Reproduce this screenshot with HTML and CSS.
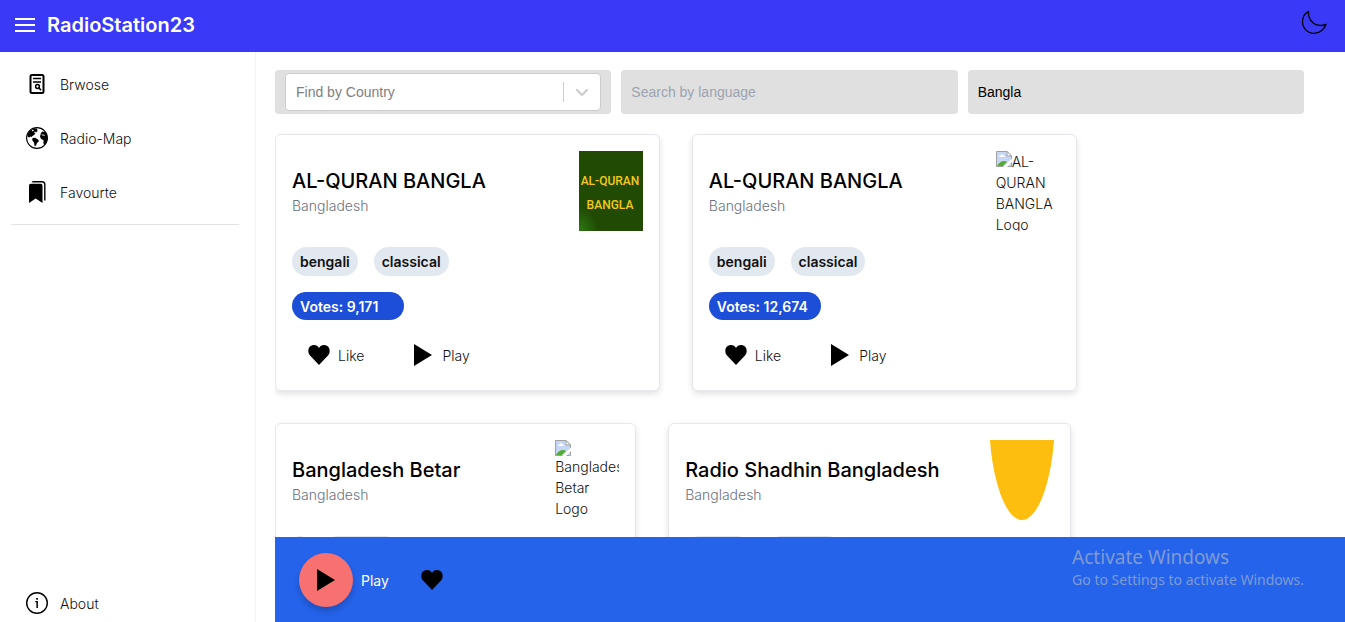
FILE: index.html
```html
<!DOCTYPE html>
<html lang="en">
<head>
    <meta charset="UTF-8">
    <meta name="viewport" content="width=device-width, initial-scale=1.0">
    <title>RadioStation23</title>
    <link rel="stylesheet" href="styles.css">
</head>
<body>
    <!-- shared icons -->
    <svg class="sprite" aria-hidden="true">
        <symbol id="heart" viewBox="0 0 22 22">
            <path d="M11 21 L2 11.500 C-1 8 0 1.500 5.500 1 C8 .8 10 2 11 4 C12 2 14 .8 16.500 1 C22 1.500 23 8 20 11.500 Z"/>
        </symbol>
        <symbol id="play" viewBox="0 0 22 22">
            <path d="M2 0 L20 11 L2 22 Z"/>
        </symbol>
        <symbol id="broken" viewBox="0 0 16 16">
            <path d="M.5 .5 H11 L15.500 5 V15.500 H.5 Z" fill="#c5d6f7" stroke="#a0a0a0"/>
            <path d="M11 .5 V5 H15.500 Z" fill="#fff" stroke="#a0a0a0"/>
            <path d="M3 6 Q3 4.500 4.500 4.500 Q6 2 7.500 4.500 Q9 4.500 9 6 Z" fill="#fff"/>
            <path d="M1 15 Q4 10 8 10 Q10 10 11 11 L7 15 Z" fill="#54ab32"/>
            <path d="M7 16 L16 7.500 V11 L11 16 Z" fill="#fff"/>
        </symbol>
    </svg>

    <header class="header">
        <button class="icon-button" aria-label="Menu">
            <svg width="20" height="14" viewBox="0 0 20 14" fill="#fff"><path d="M0 0h20v2H0zM0 6h20v2H0zM0 12h20v2H0z"/></svg>
        </button>
        <h1 class="brand">RadioStation23</h1>
        <button class="icon-button theme" aria-label="Dark mode">
            <svg width="26" height="26" viewBox="0 0 26 26" fill="none" stroke="#000" stroke-width="1.300" stroke-linejoin="round"><path d="M7.500 1.500 C3.500 3.500 1.500 7.500 1.500 11.500 C1.500 18 6.500 23.300 13 23.300 C18.500 23.300 23.500 19.500 25 14.300 C22 15.800 16.500 16.300 12.500 13.200 C8.500 10 7 6.500 7.500 1.500 Z"/></svg>
        </button>
    </header>

    <div class="layout">
        <nav class="sidebar">
            <a class="nav-link" href="#">
                <svg class="icon" viewBox="0 0 22 22" fill="none" stroke="#000" stroke-width="2">
                    <rect x="4.500" y="2" width="13" height="18" rx="1.500"/>
                    <path d="M7 5.500h8M7 9h8" stroke-width="1.600"/>
                    <circle cx="11.500" cy="13.500" r="1.900" stroke-width="1.500"/>
                    <path d="M12.800 14.800L15 17.300" stroke-width="1.700"/>
                </svg>
                Brwose
            </a>
            <a class="nav-link" href="#">
                <svg class="icon" viewBox="0 0 22 22">
                    <circle cx="11" cy="11" r="10.400" fill="none" stroke="#000" stroke-width="1.100"/>
                    <path d="M1.500 7.500 L4 3.500 L7 1.500 L11 1.500 L11.500 4 L10 5.500 L9 4.500 L8 6 L9.500 6.500 L8 8 L6.500 9 L5.500 10 L4 9.500 L3.500 10.500 L2 10 Z"/>
                    <path d="M5.500 2.500 L8 3 L6.500 4.500 Z" fill="#fff"/>
                    <path d="M6.500 11 L9 10.800 L12 12.500 L13 14 L11 16 L10 18.500 L8.700 19.500 L8 15.500 L6.300 13.500 Z"/>
                    <path d="M15 6 L16.500 4.500 L19 5 L21 8 L21.600 12 L20.500 15.500 L18.500 18 L17.500 17 L17.500 13 L15 12 L14 9.500 Z"/>
                    <path d="M15.500 7.200 L19 8 L18.500 8.800 L16 8.200 Z" fill="#fff"/>
                </svg>
                Radio-Map
            </a>
            <a class="nav-link" href="#">
                <svg class="icon" viewBox="0 0 22 22">
                    <path d="M3 22 V4.500 Q3 2.700 4.800 2.700 H14.700 Q16.500 2.700 16.500 4.500 V22 L9.700 17.500 Z"/>
                    <path d="M6 1 Q6.500 .7 8 .7 H16 Q18.800 .7 18.800 3.500 V19.500" fill="none" stroke="#000" stroke-width="1.400"/>
                </svg>
                Favourte
            </a>
            <hr class="divider">
            <a class="nav-link about" href="#">
                <svg class="icon" viewBox="0 0 22 22">
                    <circle cx="11" cy="11" r="10.300" fill="none" stroke="#000" stroke-width="1.400"/>
                    <path d="M10.200 6h1.700v1.700h-1.700zM9.300 9h2.600v7h-1.500v-5.800H9.300z"/>
                </svg>
                About
            </a>
        </nav>

        <div class="content">
            <main class="stations">
                <form class="filters">
                    <div class="filter">
                        <div class="select-box">
                            <select class="select" aria-label="Country">
                                <option>Find by Country</option>
                            </select>
                            <span class="separator"></span>
                            <svg class="chevron" viewBox="0 0 20 20" fill="none" stroke="#ccc" stroke-width="2.200" stroke-linecap="round" stroke-linejoin="round"><path d="M5 8l5 5 5-5"/></svg>
                        </div>
                    </div>
                    <input class="filter filter-input" type="text" placeholder="Search by language" aria-label="Language">
                    <input class="filter filter-input" type="text" value="Bangla" aria-label="Station name">
                </form>

                <section class="cards">
                    <article class="card">
                        <div class="card-top">
                            <div>
                                <h2 class="card-title">AL-QURAN BANGLA</h2>
                                <p class="country">Bangladesh</p>
                            </div>
                            <svg class="logo" viewBox="0 0 64 80" role="img" aria-label="AL-QURAN BANGLA Logo">
                                <defs>
                                    <pattern id="weave" width="4" height="4" patternUnits="userSpaceOnUse">
                                        <rect width="4" height="4" fill="#224b04"/>
                                        <path d="M0 1h2M2 3h2" stroke="#1e4603"/>
                                    </pattern>
                                    <radialGradient id="glow" cx="0" cy="1" r=".3">
                                        <stop offset="0" stop-color="#2c7a12"/>
                                        <stop offset="1" stop-color="#2c7a12" stop-opacity="0"/>
                                    </radialGradient>
                                </defs>
                                <rect width="64" height="80" fill="url(#weave)"/>
                                <rect width="64" height="80" fill="url(#glow)"/>
                                <text class="logo-text" x="31" y="34">AL-QURAN</text>
                                <text class="logo-text" x="31" y="58">BANGLA</text>
                            </svg>
                        </div>
                        <div class="tags"><span class="tag">bengali</span><span class="tag">classical</span></div>
                        <div class="votes">Votes: 9,171</div>
                        <div class="actions">
                            <button class="action"><svg class="icon"><use href="#heart"/></svg>Like</button>
                            <button class="action"><svg class="icon"><use href="#play"/></svg>Play</button>
                        </div>
                    </article>

                    <article class="card">
                        <div class="card-top">
                            <div>
                                <h2 class="card-title">AL-QURAN BANGLA</h2>
                                <p class="country">Bangladesh</p>
                            </div>
                            <div class="logo"><svg class="broken"><use href="#broken"/></svg>AL-QURAN BANGLA Logo</div>
                        </div>
                        <div class="tags"><span class="tag">bengali</span><span class="tag">classical</span></div>
                        <div class="votes">Votes: 12,674</div>
                        <div class="actions">
                            <button class="action"><svg class="icon"><use href="#heart"/></svg>Like</button>
                            <button class="action"><svg class="icon"><use href="#play"/></svg>Play</button>
                        </div>
                    </article>

                    <article class="card card-narrow">
                        <div class="card-top">
                            <div>
                                <h2 class="card-title">Bangladesh Betar</h2>
                                <p class="country">Bangladesh</p>
                            </div>
                            <div class="logo"><svg class="broken broken-block"><use href="#broken"/></svg>Bangladesh Betar Logo</div>
                        </div>
                        <div class="tags"><span class="tag"></span><span class="tag">classical</span></div>
                    </article>

                    <article class="card card-wide">
                        <div class="card-top">
                            <div>
                                <h2 class="card-title">Radio Shadhin Bangladesh</h2>
                                <p class="country">Bangladesh</p>
                            </div>
                            <svg class="logo" viewBox="0 0 64 80" role="img" aria-label="Radio Shadhin Bangladesh Logo">
                                <path d="M0 0 H64 C61 42 48 80 32 80 C16 80 3 42 0 0 Z" fill="#fdbe10"/>
                            </svg>
                        </div>
                        <div class="tags"><span class="tag">bengali</span><span class="tag">classical</span></div>
                    </article>
                </section>
            </main>

            <footer class="player">
                <button class="play-button" id="play-button" aria-label="Play station"><svg class="icon"><use href="#play"/></svg></button>
                <label class="play-label" for="play-button">Play</label>
                <button class="icon-button" aria-label="Like station"><svg class="icon"><use href="#heart"/></svg></button>
                <div class="activate">
                    <p class="activate-title">Activate Windows</p>
                    <p class="activate-text">Go to Settings to activate Windows.</p>
                </div>
            </footer>
        </div>
    </div>
</body>
</html>
```
FILE: styles.css
```css
* {
    box-sizing: border-box;
}

body {
    margin: 0;
    height: 100vh;
    display: flex;
    flex-direction: column;
    overflow: hidden;
    font-family: Inter, sans-serif;
    font-size: 14px;
    font-weight: 300;
    line-height: 21px;
    color: #111;
    background-color: #fff;
}

h1, h2, p {
    margin: 0;
}

button {
    font: inherit;
    color: inherit;
    border: none;
    background: none;
    padding: 0;
    cursor: pointer;
}

.sprite {
    position: absolute;
    width: 0;
    height: 0;
}

.icon {
    width: 22px;
    height: 22px;
    flex: none;
}

.icon-button {
    display: flex;
}

/* header */
.header {
    display: flex;
    align-items: center;
    gap: 12px;
    height: 52px;
    flex: none;
    padding: 0 18px 2px 15px;
    background-color: #3939f7;
}

.brand {
    font-size: 20px;
    line-height: 28px;
    font-weight: 600;
    color: #fff;
}

.theme {
    margin-left: auto;
    padding-bottom: 4px;
}

.layout {
    display: flex;
    flex: 1;
    min-height: 0;
}

/* sidebar */
.sidebar {
    display: flex;
    flex-direction: column;
    width: 256px;
    flex: none;
    padding: 5px 16px 0 11px;
    border-right: 1px solid #f3f3f5;
}

.nav-link {
    display: flex;
    align-items: center;
    gap: 12px;
    height: 54px;
    flex: none;
    padding-left: 15px;
    color: #111;
    text-decoration: none;
}

.divider {
    width: 100%;
    margin: 5px 0 0;
    border: none;
    border-top: 1px solid #e2e2e8;
}

.about {
    margin-top: auto;
    height: 38px;
}

/* content */
.content {
    display: flex;
    flex-direction: column;
    flex: 1;
    min-width: 0;
    margin-left: 19px;
}

.stations {
    flex: 1;
    min-height: 0;
    overflow: hidden;
    padding: 18px 41px 0 0;
}

.filters {
    display: grid;
    grid-template-columns: repeat(3, 1fr);
    gap: 10px;
    margin-bottom: 20px;
}

.filter {
    min-width: 0;
    height: 44px;
    padding: 3px 10px;
    border: none;
    border-radius: 4px;
    background-color: #e0e0e0;
}

.filter-input, .select {
    font-family: "Liberation Sans", Arial, sans-serif;
    font-size: 14px;
    color: #000;
}

.filter-input::placeholder {
    color: #9ca3af;
}

.select-box {
    display: flex;
    align-items: center;
    height: 38px;
    padding: 0 8px 0 10px;
    border: 1px solid #ccc;
    border-radius: 4px;
    background-color: #fff;
}

.select {
    flex: 1;
    min-width: 0;
    padding: 0;
    border: none;
    appearance: none;
    background: none;
    color: #808080;
}

.separator {
    width: 1px;
    height: 20px;
    margin-right: 8px;
    background-color: #ccc;
}

.chevron {
    width: 20px;
    height: 20px;
}

/* cards */
.cards {
    display: flex;
    flex-wrap: wrap;
    align-items: flex-start;
    gap: 32px;
}

.card {
    width: 37.4%;
    padding: 16px;
    border: 1px solid #e5e7eb;
    border-radius: 6px;
    box-shadow: 0 3px 6px rgba(0, 0, 0, 0.12);
}

.card-narrow {
    width: 35.1%;
}

.card-wide {
    width: 39.1%;
}

.card-top {
    display: flex;
    align-items: center;
    justify-content: space-between;
}

.card-title {
    font-size: 20px;
    line-height: 28px;
    font-weight: 500;
    color: #000;
}

.country {
    color: #6b7280;
}

.logo {
    width: 64px;
    height: 80px;
    flex: none;
    overflow: hidden;
}

.logo-text {
    font-family: Roboto, sans-serif;
    font-size: 12px;
    font-weight: 500;
    text-anchor: middle;
    fill: #f5c916;
}

.broken {
    width: 16px;
    height: 16px;
    vertical-align: top;
}

.broken-block {
    display: block;
}

.tags {
    display: flex;
    gap: 16px;
    margin: 16px 0;
}

.tag, .votes {
    padding: 4px 8px;
    border-radius: 16px;
    font-weight: 600;
}

.tag {
    height: 29px;
    background-color: #e2e8f0;
    color: #111;
}

.votes {
    width: 112px;
    height: 28px;
    background-color: #1d4ed8;
    color: #fff;
}

.actions {
    display: flex;
    gap: 16px;
    padding-top: 16px;
}

.action {
    display: flex;
    align-items: center;
    gap: 8px;
    height: 38px;
    padding: 0 16px;
}

/* player */
.player {
    display: flex;
    align-items: center;
    flex: none;
    padding: 16px 41px 15px 24px;
    background-color: #2563eb;
}

.play-button {
    display: flex;
    align-items: center;
    justify-content: center;
    width: 54px;
    height: 54px;
    border-radius: 50%;
    background-color: #f87171;
    box-shadow: 0 4px 6px rgba(0, 0, 0, 0.2);
}

.play-label {
    margin: 0 32px 0 8px;
    font-weight: 400;
    color: #fff;
}

.activate {
    align-self: flex-start;
    margin: -8px 0 0 auto;
    font-family: "Noto Sans", "Open Sans", sans-serif;
    font-weight: 400;
    color: #7e9bd2;
}

.activate-title {
    font-size: 19px;
    line-height: 24px;
}

.activate-text {
    font-size: 14px;
    line-height: 21px;
}
```
